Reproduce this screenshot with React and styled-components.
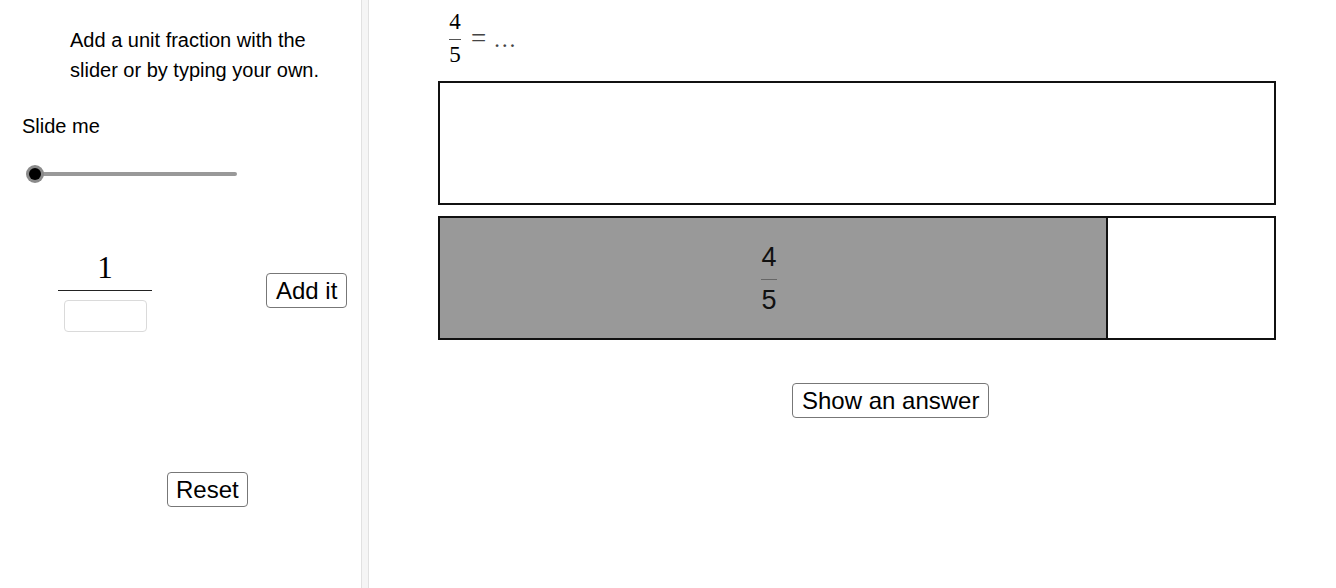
import styled, { createGlobalStyle } from 'styled-components';

const GlobalStyle = createGlobalStyle`
  html, body {
    margin: 0;
    padding: 0;
    background: #fff;
    overflow: hidden;
  }
  * {
    box-sizing: border-box;
  }
`;

const Page = styled.div`
  display: flex;
  height: 588px;
  font-family: 'Liberation Sans', Arial, sans-serif;
  color: #000;
`;

const LeftPanel = styled.aside`
  width: 361px;
  flex-shrink: 0;
  display: flex;
  flex-direction: column;
`;

const Divider = styled.div`
  width: 8px;
  flex-shrink: 0;
  background: #f5f5f5;
  border-left: 1px solid #e1e1e1;
  border-right: 1px solid #e1e1e1;
`;

const RightPanel = styled.main`
  flex: 1;
  display: flex;
  flex-direction: column;
  padding-left: 69px;
`;

const Instructions = styled.p`
  margin: 25px 0 0 70px;
  font-size: 20px;
  line-height: 30px;
`;

const Label = styled.div`
  margin: 26px 0 0 22px;
  font-size: 20px;
  line-height: 30px;
`;

const Slider = styled.div`
  position: relative;
  margin: 23px 0 0 35px;
  width: 202px;
  height: 20px;
  display: flex;
  align-items: center;
`;

const Track = styled.div`
  width: 100%;
  height: 4px;
  border-radius: 2px;
  background: #999;
`;

const Knob = styled.span`
  position: absolute;
  left: -9px;
  top: 1px;
  width: 18px;
  height: 18px;
  border-radius: 50%;
  background: #8a8a8a;
  display: flex;
  align-items: center;
  justify-content: center;
  &::after {
    content: '';
    width: 12px;
    height: 12px;
    border-radius: 50%;
    background: #000;
  }
`;

const FractionRow = styled.div`
  display: flex;
  align-items: flex-start;
  margin: 68px 0 0 58px;
`;

const InputFraction = styled.div`
  width: 94px;
  display: flex;
  flex-direction: column;
  align-items: center;
`;

const SerifNumber = styled.div`
  font-family: 'Liberation Serif', 'Times New Roman', serif;
  font-size: ${(p) => p.$size}px;
  line-height: ${(p) => p.$size}px;
  margin-top: ${(p) => p.$top || 0}px;
`;

const FracBar = styled.div`
  align-self: stretch;
  height: 1px;
  margin-top: ${(p) => p.$gap}px;
  background: ${(p) => p.$color || '#222'};
`;

const DenomInput = styled.input`
  margin-top: 9px;
  width: 83px;
  height: 32px;
  border: 1px solid #dadada;
  border-radius: 4px;
  background: #fff;
  font: inherit;
  outline: none;
`;

const Button = styled.button`
  font-family: 'Liberation Sans', Arial, sans-serif;
  font-size: 24px;
  line-height: 33px;
  height: 35px;
  padding: 0 ${(p) => p.$pad || 9}px;
  color: #000;
  background: #fff;
  border: 1px solid #777;
  border-radius: 4px;
  cursor: pointer;
  margin-top: ${(p) => p.$top || 0}px;
  margin-left: ${(p) => p.$left || 0}px;
  align-self: flex-start;
`;

const Equation = styled.div`
  display: flex;
  align-items: center;
  margin: 10px 0 0 11px;
  font-family: 'Liberation Serif', 'Times New Roman', serif;
`;

const MathFrac = styled.div`
  display: flex;
  flex-direction: column;
  align-items: center;
  width: 12px;
`;

const Operator = styled.span`
  color: #444;
  font-size: ${(p) => p.$size}px;
  margin-left: ${(p) => p.$left}px;
  margin-top: ${(p) => p.$top || 0}px;
`;

const Bar = styled.div`
  width: 838px;
  height: 124px;
  border: 2px solid #111;
  display: flex;
  margin-top: ${(p) => p.$top}px;
`;

const Filled = styled.div`
  width: ${(p) => p.$width}px;
  background: #999;
  border-right: 2px solid #111;
  display: flex;
  align-items: center;
  justify-content: center;
  padding-right: 8px;
`;

const BarFrac = styled.div`
  display: flex;
  flex-direction: column;
  align-items: center;
  width: 16px;
  font-size: 27px;
  line-height: 24px;
  color: #111;
`;

const BarDigit = styled.span`
  margin-top: ${(p) => p.$top || 0}px;
`;

function Fraction({ num, den }) {
  return (
    <MathFrac>
      <SerifNumber $size={23}>{num}</SerifNumber>
      <FracBar $gap={6} $color="#555" />
      <SerifNumber $size={23} $top={3}>{den}</SerifNumber>
    </MathFrac>
  );
}

export default function App() {
  const whole = 838 - 4;
  const shaded = Math.round(whole * (4 / 5)) + 1;

  return (
    <>
      <GlobalStyle />
      <Page>
        <LeftPanel>
          <Instructions>
            Add a unit fraction with the
            <br />
            slider or by typing your own.
          </Instructions>
          <Label>Slide me</Label>
          <Slider>
            <Track />
            <Knob />
          </Slider>
          <FractionRow>
            <InputFraction>
              <SerifNumber $size={31}>1</SerifNumber>
              <FracBar $gap={7} />
              <DenomInput type="text" />
            </InputFraction>
            <Button $top={21} $left={114}>Add it</Button>
          </FractionRow>
          <Button $top={140} $left={167} $pad={8}>Reset</Button>
        </LeftPanel>
        <Divider />
        <RightPanel>
          <Equation>
            <Fraction num="4" den="5" />
            <Operator $size={27} $left={10}>=</Operator>
            <Operator $size={23} $left={7} $top={4}>…</Operator>
          </Equation>
          <Bar $top={15} />
          <Bar $top={11}>
            <Filled $width={shaded}>
              <BarFrac>
                <BarDigit>4</BarDigit>
                <FracBar $gap={10} $color="#666" />
                <BarDigit $top={8}>5</BarDigit>
              </BarFrac>
            </Filled>
          </Bar>
          <Button $top={43} $left={354}>Show an answer</Button>
        </RightPanel>
      </Page>
    </>
  );
}
